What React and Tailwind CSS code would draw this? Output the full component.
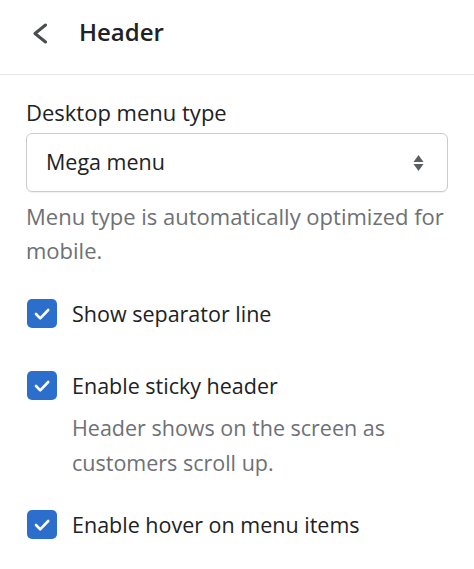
import React from "react";

function Check({ label, help }) {
  return (
    <div className="flex flex-col">
      <div className="flex items-center">
        <div className="w-[30px] h-[29px] rounded-[5px] bg-[#2c6ecb] flex items-center justify-center shrink-0">
          <svg width="30" height="29" viewBox="0 0 30 29">
            <polyline points="9,15 13.2,19.3 21.2,11" fill="none" stroke="#fff" strokeWidth="2.6" strokeLinecap="round" strokeLinejoin="round" />
          </svg>
        </div>
        <span className="ml-[15px] text-[21.5px] text-[#202223] leading-[29px]">{label}</span>
      </div>
      {help && (
        <div className="pl-[45px] mt-[10px] text-[21.5px] leading-[35px] text-[#6d7175]">{help}</div>
      )}
    </div>
  );
}

export default function App() {
  return (
    <div className="w-[474px] h-[569px] bg-white overflow-hidden" style={{ fontFamily: '"Open Sans", sans-serif' }}>
      <div className="h-[75px] border-b border-[#e4e5e7] flex items-start pt-[15px] pl-[33px]">
        <svg width="16" height="37" viewBox="0 0 16 37" className="shrink-0">
          <polyline points="12.5,10 2,18.5 12.5,27" fill="none" stroke="#4a4d50" strokeWidth="3" strokeLinecap="round" strokeLinejoin="round" />
        </svg>
        <span className="ml-[30px] text-[24px] font-semibold text-[#202223] leading-[34px]">Header</span>
      </div>
      <div className="px-[26px] pt-[22px]">
        <div className="text-[22px] text-[#202223] leading-[30px]">Desktop menu type</div>
        <div className="mt-[6px] h-[59px] border border-[#c9cccf] rounded-[6px] flex items-center justify-between pl-[19px] pr-[23px] shadow-[0_1px_0_rgba(0,0,0,0.05)]">
          <span className="text-[21.5px] text-[#202223]">Mega menu</span>
          <svg width="11" height="18" viewBox="0 0 11 18">
            <polygon points="5.5,1 10.5,8 0.5,8" fill="#5c5f62" />
            <polygon points="0.5,10 10.5,10 5.5,17" fill="#5c5f62" />
          </svg>
        </div>
        <div className="mt-[7px] text-[22px] leading-[34px] text-[#6d7175]">
          Menu type is automatically optimized for mobile.
        </div>
        <div className="mt-[32px] flex flex-col pl-[1px]">
          <Check label="Show separator line" />
          <div className="mt-[43px]">
            <Check label="Enable sticky header" help="Header shows on the screen as customers scroll up." />
          </div>
          <div className="mt-[30px]">
            <Check label="Enable hover on menu items" />
          </div>
        </div>
      </div>
    </div>
  );
}
